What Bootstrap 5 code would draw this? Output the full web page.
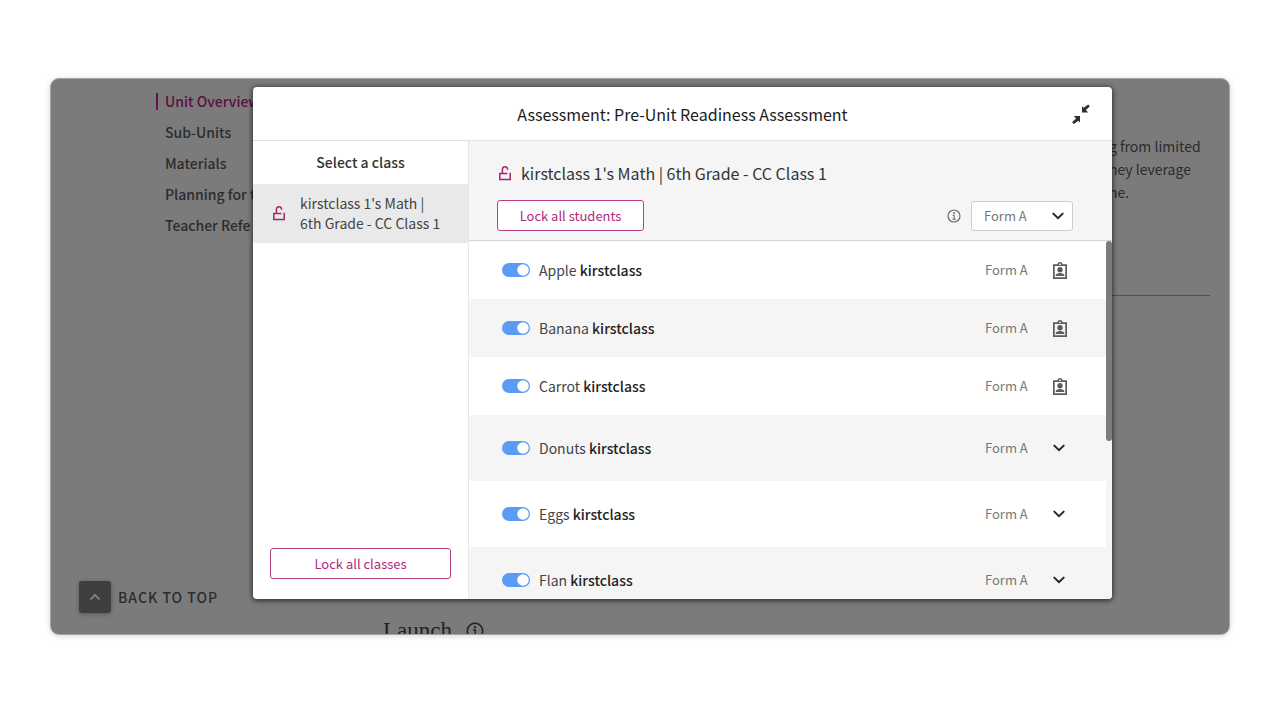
<!DOCTYPE html>
<html lang="en">
<head>
<meta charset="utf-8">
<meta name="viewport" content="width=device-width, initial-scale=1">
<title>Assessment: Pre-Unit Readiness Assessment</title>
<link href="https://cdn.jsdelivr.net/npm/bootstrap@5.3.0/dist/css/bootstrap.min.css" rel="stylesheet">
<style>
  :root { --brand: #a6246f; --ink: #333; --line: #e2e2e2; --tint: #f5f5f5; }
  body { font-family: "Noto Sans CJK SC", "Open Sans", sans-serif; font-size: 14px; line-height: 20px; color: var(--ink); background: #fff; }
  .stage { height: 100vh; min-height: 480px; padding: 78px 50px; }
  .shell { background: #7b7b7b; border: 1px solid #a6a6a6; border-radius: 9px; overflow: hidden; box-shadow: 0 1px 6px rgba(0,0,0,.16); }
  .side-col { width: 332px; padding: 7px 0 21px 28px; }
  .side-nav { padding-left: 78px; }
  .side-nav a { line-height: 31px; padding-left: 8px; color: #2c2c2c; font-weight: 500; text-decoration: none; white-space: nowrap; display: flex; align-items: center; }
  .side-nav a.current { color: #5f0d3f; }
  .side-nav a::before { content: ""; width: 2px; height: 17px; margin: 0 7px 0 -9px; }
  .side-nav a.current::before { background: #6d0f48; }
  .to-top { color: #2c2c2c; letter-spacing: 1px; font-weight: 500; gap: 7px; }
  .to-top-box { width: 32px; height: 32px; background: #3f3f3f; border-radius: 3px; box-shadow: 0 1px 4px rgba(0,0,0,.3); }
  .main-col { padding: 56px 19px 0 0; min-width: 0; }
  .intro { color: #2c2c2c; line-height: 23px; width: 101px; white-space: nowrap; }
  .rule { border-top: 1px solid #505050; margin-top: 91px; }
  .launch { font: 23px/30px "Liberation Serif", serif; color: #222; margin-bottom: -12px; gap: 14px; }
  .overlay-pad { padding: 8px 117px 35px 202px; }
  .panel { background: #fff; border-radius: 4px; overflow: hidden; box-shadow: 0 1px 5px 1px rgba(0,0,0,.6); }
  .panel-head { height: 54px; border-bottom: 1px solid var(--line); padding: 0 21px 0 41px; }
  .panel-title { font-size: 16px; line-height: 24px; font-weight: 400; color: #1c1c1c; }
  .plain-btn { border: 0; background: none; padding: 0; line-height: 0; }
  .class-col { width: 216px; border-right: 1px solid #e8e8e8; padding-bottom: 20px; }
  .class-head { font-size: 14px; line-height: 43px; font-weight: 500; }
  .class-item { background: #e9e9e9; padding: 9px 12px 10px 20px; gap: 15px; border: 0; color: #444; text-align: left; }
  .lock-btn { --bs-btn-color: #b02a7c; --bs-btn-border-color: #b5427f; --bs-btn-bg: #fff; --bs-btn-hover-bg: var(--brand); --bs-btn-hover-color: #fff;
    --bs-btn-font-size: 13px; --bs-btn-line-height: 20px; --bs-btn-padding-y: 4px; --bs-btn-border-radius: 3px; height: 31px; }
  .class-foot { padding: 0 17px; }
  .roster-head { background: var(--tint); height: 100px; border-bottom: 1px solid #d4d4d4; padding: 20px 39px 9px 28px; }
  .roster-title { font-size: 16px; line-height: 24px; font-weight: 400; }
  .title-row { gap: 10px; padding-left: 2px; }
  .all-students { width: 147px; }
  .form-info { color: #6b6b6b; margin-right: 10px; }
  .form-pick { width: 102px; height: 30px; padding: 0 30px 0 12px; font-size: 13px; line-height: 20px; color: #777; border: 1px solid transparent; border-radius: 3px; background-color: transparent;
    background-image: url("data:image/svg+xml,%3Csvg xmlns='http://www.w3.org/2000/svg' viewBox='0 0 12 12'%3E%3Cpath d='M1.3 3.6 6 8.2l4.700-4.600' fill='none' stroke='%23222' stroke-width='1.900' stroke-linecap='round'/%3E%3C/svg%3E");
    background-size: 12px 12px; background-position: right 8px center; }
  .form-pick.boxed { background-color: #fff; border-color: #ccc; }
  .student { height: 58px; padding: 0 32px 0 33px; }
  .student.tall { height: 66px; }
  .student:nth-child(even) { background: var(--tint); }
  .student label { color: #444; }
  .student b { font-weight: 500; color: #222; }
  .form-tag { width: 102px; padding: 0 7px 0 13px; font-size: 13px; color: #777; }
  .student .form-check-input { width: 28px; height: 14px; margin: 0 9px 0 0; float: none; border: 0; }
  .student .form-check-input:checked { background-color: #5b9bf5; --bs-form-switch-bg: url("data:image/svg+xml,%3Csvg xmlns='http://www.w3.org/2000/svg' viewBox='-4 -4 8 8'%3E%3Ccircle r='3.300' fill='%23fff'/%3E%3C/svg%3E"); }
  .track { width: 6px; background: var(--tint); }
  .thumb { height: 56%; background: #7c7c7c; border-radius: 3px; }
</style>
</head>
<body>
<svg class="d-none">
  <symbol id="lock" viewBox="0 0 12 15"><g fill="none" stroke="#a6246f" stroke-width="1.500"><path d="M11.200 6.800V13.600H.8V7.600H8.400"/><path d="M3.400 7.600V3.600C3.400 1.800 4.400.8 6 .8S8.600 1.800 8.600 3.700"/></g></symbol>
  <symbol id="badge-id" viewBox="0 0 14 17"><path fill="#5c5c5c" fill-rule="evenodd" d="M0 2.200h4.400C4.700.8 5.700 0 7 0s2.300.8 2.600 2.200H14V17H0zM1.700 4.100v11.100h10.600V4.100zM7 1.400a.9.9 0 1 0 0 1.800.9.9 0 0 0 0-1.800z"/><circle cx="7" cy="7.700" r="2.700" fill="#5c5c5c"/><path fill="#5c5c5c" d="M2.700 14v-.9c0-1.500 2.800-2.200 4.300-2.200s4.300.7 4.300 2.200v.9z"/></symbol>
  <symbol id="info" viewBox="0 0 14 14"><circle cx="7" cy="7" r="6" fill="none" stroke="currentColor" stroke-width="1.200"/><path d="M5.600 6.200H7.200V10M5.400 10.200h3.400" fill="none" stroke="currentColor" stroke-width="1.100"/><circle cx="7" cy="4" r=".9" fill="currentColor"/></symbol>
</svg>
<div class="stage">
  <div class="shell position-relative h-100 d-flex">
    <aside class="side-col d-flex flex-column justify-content-between flex-shrink-0">
      <nav class="side-nav">
        <a class="current" href="#">Unit Overview</a>
        <a href="#">Sub-Units</a>
        <a href="#">Materials</a>
        <a href="#">Planning for the</a>
        <a href="#">Teacher Refe</a>
      </nav>
      <a class="to-top d-flex align-items-center text-decoration-none" href="#">
        <span class="to-top-box d-flex align-items-center justify-content-center"><svg width="12" height="8" viewBox="0 0 12 8"><path d="M1.500 6.500 6 2l4.500 4.500" fill="none" stroke="#8a8a8a" stroke-width="1.600"/></svg></span>
        BACK TO TOP
      </a>
    </aside>
    <main class="main-col flex-grow-1 d-flex flex-column">
      <div class="intro ms-auto"><div>g from limited</div><div>hey leverage</div><div>ne.</div></div>
      <div class="rule"></div>
      <h2 class="launch mt-auto d-flex align-items-center">Launch <svg width="18" height="18"><use href="#info"/></svg></h2>
    </main>

    <div class="overlay-pad position-absolute top-0 start-0 w-100 h-100">
      <section class="panel h-100 d-flex flex-column" role="dialog" aria-labelledby="dlg-title">
        <header class="panel-head d-flex align-items-center flex-shrink-0">
          <h1 id="dlg-title" class="panel-title flex-grow-1 text-center m-0">Assessment: Pre-Unit Readiness Assessment</h1>
          <button class="plain-btn" type="button" aria-label="Collapse"><svg width="20" height="20" viewBox="0 0 20 20"><g fill="#2d2d2d"><path d="M11 2.200 12.700 3.800 17.200.4l1.700 1.900-4 3.700 2.200 2.600H11z"/><path d="M9 18.400 7.300 16.800 2.800 20 1.100 18.200l4-3.700-2.200-2.500H9z"/></g></svg></button>
        </header>
        <div class="d-flex flex-grow-1 overflow-hidden">
          <div class="class-col d-flex flex-column flex-shrink-0">
            <h2 class="class-head text-center m-0">Select a class</h2>
            <button class="class-item d-flex align-items-center" type="button">
              <svg class="flex-shrink-0" width="12" height="15"><use href="#lock"/></svg>
              <span>kirstclass 1's Math | <br>6th Grade - CC Class 1</span>
            </button>
            <div class="class-foot mt-auto"><button class="btn lock-btn w-100" type="button">Lock all classes</button></div>
          </div>
          <div class="flex-grow-1 d-flex flex-column overflow-hidden">
            <div class="roster-head d-flex flex-column justify-content-between flex-shrink-0">
              <div class="title-row d-flex align-items-center">
                <svg width="12" height="15"><use href="#lock"/></svg>
                <h2 class="roster-title m-0">kirstclass 1's Math | 6th Grade - CC Class 1</h2>
              </div>
              <div class="d-flex align-items-center">
                <button class="btn lock-btn all-students me-auto" type="button">Lock all students</button>
                <svg class="form-info" width="14" height="14"><use href="#info"/></svg>
                <select class="form-select form-pick boxed" aria-label="Form for all students"><option>Form A</option></select>
              </div>
            </div>
            <div class="d-flex flex-grow-1 overflow-hidden">
              <div class="flex-grow-1">
                <div class="student d-flex align-items-center">
                  <div class="form-switch p-0 m-0 d-flex align-items-center me-auto"><input class="form-check-input" type="checkbox" role="switch" id="s1" checked><label for="s1">Apple <b>kirstclass</b></label></div>
                  <div class="form-tag d-flex align-items-center justify-content-between">Form A <svg width="14" height="17"><use href="#badge-id"/></svg></div>
                </div>
                <div class="student d-flex align-items-center">
                  <div class="form-switch p-0 m-0 d-flex align-items-center me-auto"><input class="form-check-input" type="checkbox" role="switch" id="s2" checked><label for="s2">Banana <b>kirstclass</b></label></div>
                  <div class="form-tag d-flex align-items-center justify-content-between">Form A <svg width="14" height="17"><use href="#badge-id"/></svg></div>
                </div>
                <div class="student d-flex align-items-center">
                  <div class="form-switch p-0 m-0 d-flex align-items-center me-auto"><input class="form-check-input" type="checkbox" role="switch" id="s3" checked><label for="s3">Carrot <b>kirstclass</b></label></div>
                  <div class="form-tag d-flex align-items-center justify-content-between">Form A <svg width="14" height="17"><use href="#badge-id"/></svg></div>
                </div>
                <div class="student tall d-flex align-items-center">
                  <div class="form-switch p-0 m-0 d-flex align-items-center me-auto"><input class="form-check-input" type="checkbox" role="switch" id="s4" checked><label for="s4">Donuts <b>kirstclass</b></label></div>
                  <select class="form-select form-pick" aria-label="Form for Donuts"><option>Form A</option></select>
                </div>
                <div class="student tall d-flex align-items-center">
                  <div class="form-switch p-0 m-0 d-flex align-items-center me-auto"><input class="form-check-input" type="checkbox" role="switch" id="s5" checked><label for="s5">Eggs <b>kirstclass</b></label></div>
                  <select class="form-select form-pick" aria-label="Form for Eggs"><option>Form A</option></select>
                </div>
                <div class="student tall d-flex align-items-center">
                  <div class="form-switch p-0 m-0 d-flex align-items-center me-auto"><input class="form-check-input" type="checkbox" role="switch" id="s6" checked><label for="s6">Flan <b>kirstclass</b></label></div>
                  <select class="form-select form-pick" aria-label="Form for Flan"><option>Form A</option></select>
                </div>
              </div>
              <div class="track flex-shrink-0"><div class="thumb"></div></div>
            </div>
          </div>
        </div>
      </section>
    </div>
  </div>
</div>
<script src="https://cdn.jsdelivr.net/npm/bootstrap@5.3.0/dist/js/bootstrap.bundle.min.js"></script>
</body>
</html>
